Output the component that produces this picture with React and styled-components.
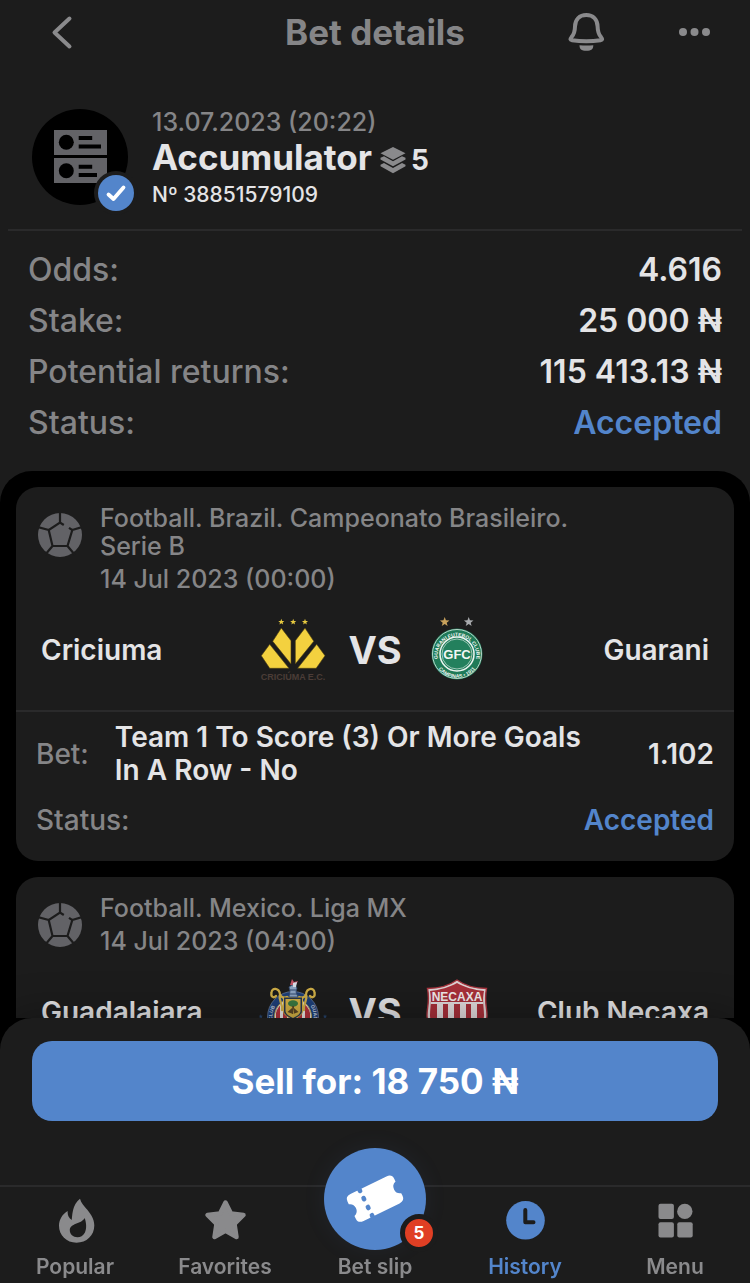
import React from "react";
import styled, { createGlobalStyle } from "styled-components";

const COLORS = {
  surface: "#1c1c1c",
  back: "#000000",
  line: "#2a2a2b",
  text: "#e4e4e6",
  muted: "#858587",
  icon: "#8a8a8c",
  ball: "#626266",
  blue: "#5385cb",
  red: "#e03f24",
};

const GlobalStyle = createGlobalStyle`
  * {
    box-sizing: border-box;
  }
  body {
    margin: 0;
    background: ${COLORS.back};
    color: ${COLORS.text};
    font-family: Inter, "Liberation Sans", sans-serif;
  }
  h1, h2, p, dl, dd {
    margin: 0;
  }
  button {
    border: 0;
    padding: 0;
    background: none;
    color: inherit;
    font: inherit;
    cursor: pointer;
  }
  svg {
    display: block;
    flex: none;
  }
`;

const Page = styled.div`
  display: flex;
  flex-direction: column;
  height: 100vh;
  background: ${COLORS.back};
`;

const Content = styled.main`
  flex: 1;
  min-height: 0;
  overflow-y: auto;
  scrollbar-width: none;
  background: ${COLORS.surface};
`;

const Header = styled.header`
  display: grid;
  grid-template-columns: 1fr auto 1fr;
  align-items: center;
  height: 64px;
  padding: 0 32px;
`;

const Title = styled.h1`
  color: ${COLORS.muted};
  font-size: 35px;
  font-weight: 700;
  line-height: 40px;
`;

const IconButton = styled.button`
  display: block;
  width: 48px;
  height: 48px;
`;

const Actions = styled.div`
  display: flex;
  justify-content: flex-end;
  gap: 60px;
`;

const Summary = styled.section`
  display: flex;
  gap: 24px;
  margin: 0 8px;
  padding: 45px 24px 18px;
  border-bottom: 2px solid ${COLORS.line};
`;

const SummaryText = styled.div`
  display: flex;
  flex-direction: column;
`;

const SummaryDate = styled.p`
  color: ${COLORS.muted};
  font-size: 25px;
  font-weight: 500;
  line-height: 26px;
`;

const SummaryTitle = styled.h2`
  display: flex;
  align-items: center;
  gap: 8px;
  font-size: 35px;
  font-weight: 700;
  line-height: 44px;
`;

const Legs = styled.span`
  display: flex;
  align-items: center;
  gap: 5px;
  padding-top: 5px;
  font-size: 28px;
  line-height: 34px;
`;

const SummaryNumber = styled.p`
  font-size: 21px;
  font-weight: 500;
  line-height: 32px;
`;

const Stats = styled.dl`
  padding: 13px 28px 23px;
`;

const Stat = styled.div`
  display: flex;
  justify-content: space-between;
  font-size: 32px;
  line-height: 51px;
`;

const StatName = styled.dt`
  color: ${COLORS.muted};
  font-weight: 500;
`;

const StatValue = styled.dd`
  color: ${(props) => (props.$accent ? COLORS.blue : COLORS.text)};
  font-weight: 600;
`;

const Events = styled.section`
  display: flex;
  flex-direction: column;
  gap: 16px;
  padding: 16px;
  border-radius: 32px 32px 0 0;
  background: ${COLORS.back};
`;

const Card = styled.article`
  border-radius: 22px;
  background: ${COLORS.surface};
`;

const League = styled.div`
  display: flex;
  gap: 18px;
  padding: 17px 140px 0 22px;
  color: ${COLORS.muted};
  font-size: 25px;
  font-weight: 500;
  line-height: 28px;

  & > svg {
    margin-top: 9px;
  }
`;

const Kickoff = styled.p`
  padding-top: 5px;
`;

const Match = styled.div`
  display: grid;
  grid-template-columns: 1fr auto 1fr;
  align-items: center;
  gap: 20px;
  padding: 23px 25px 26px;
`;

const Team = styled.p`
  font-size: 28px;
  font-weight: 600;
  line-height: 34px;
  text-align: ${(props) => (props.$right ? "right" : "left")};
`;

const Versus = styled.div`
  display: grid;
  grid-template-columns: 68px 52px 68px;
  justify-items: center;
  align-items: center;
  gap: 22px;
  font-size: 38px;
  font-weight: 700;
  line-height: 44px;
`;

const Bet = styled.dl`
  border-top: 2px solid ${COLORS.line};
  padding: 9px 20px 24px;
  font-size: 28px;
`;

const BetRow = styled.div`
  display: flex;
  align-items: center;
  gap: 26px;
  padding-bottom: ${(props) => (props.$spaced ? "17px" : "0")};
  line-height: 33px;
`;

const BetName = styled.dt`
  color: ${COLORS.muted};
  font-weight: 500;
`;

const BetPick = styled.dd`
  flex: 1;
  padding-right: 20px;
  font-weight: 600;
`;

const BetValue = styled.dd`
  margin-left: auto;
  color: ${(props) => (props.$accent ? COLORS.blue : COLORS.text)};
  font-weight: 600;
`;

const Dock = styled.footer`
  position: relative;
  border-radius: 32px 32px 0 0;
  background: ${COLORS.surface};
  box-shadow: 0 -4px 40px rgba(0, 0, 0, 0.3);
`;

const SellArea = styled.div`
  padding: 23px 32px 64px;
`;

const SellButton = styled.button`
  width: 100%;
  height: 80px;
  border-radius: 20px;
  background: ${COLORS.blue};
  color: #ffffff;
  font-size: 35px;
  font-weight: 700;
`;

/* the row keeps its height so that the bet slip circle can rise above it */
const Nav = styled.nav`
  display: grid;
  grid-template-columns: repeat(5, 1fr);
  grid-template-rows: 96px;
  align-items: end;
  border-top: 2px solid ${COLORS.line};
`;

const Tab = styled.a`
  display: flex;
  flex-direction: column;
  align-items: center;
  color: ${(props) => (props.$active ? COLORS.blue : COLORS.icon)};
  font-size: 21px;
  font-weight: 600;
  line-height: 24px;
  text-decoration: none;
  padding-bottom: 4px;
`;

const TabIcon = styled.span`
  height: 59px;
`;

const SlipIcon = styled.span`
  position: relative;
  height: 107px;
`;

const SlipCircle = styled.span`
  display: block;
  border-radius: 50%;
  background: ${COLORS.blue};
  box-shadow: 0 0 24px rgba(83, 133, 203, 0.08);
`;

const Badge = styled.span`
  position: absolute;
  right: -12px;
  bottom: 3px;
  width: 38px;
  height: 38px;
  border: 5px solid ${COLORS.surface};
  border-radius: 50%;
  background: ${COLORS.red};
  color: #ffffff;
  font-size: 17px;
  font-weight: 700;
  line-height: 28px;
  text-align: center;
`;

const starPath = (cx, cy, r) => {
  const points = [];
  for (let i = 0; i < 10; i++) {
    const radius = i % 2 ? r * 0.42 : r;
    const angle = (Math.PI / 5) * i - Math.PI / 2;
    points.push(
      `${(cx + radius * Math.cos(angle)).toFixed(2)},${(
        cy +
        radius * Math.sin(angle)
      ).toFixed(2)}`
    );
  }
  return points.join(" ");
};

const BackIcon = () => (
  <svg width="48" height="48" viewBox="0 0 48 48" fill="none">
    <path
      d="M37.500 10.500 22.500 24.500 37.500 38.500"
      stroke={COLORS.icon}
      strokeWidth="4"
      strokeLinecap="round"
      strokeLinejoin="round"
    />
  </svg>
);

const BellIcon = () => (
  <svg width="48" height="48" viewBox="0 0 48 48" fill="none">
    <path
      d="M24.300 7C17.500 7 13.200 11.500 13 18.500C12.900 24 12 26.500 9.500 29.200C7.800 31.200 8.200 32 10 32.200C19 33.600 29.600 33.600 38.600 32.200C40.400 32 40.800 31.200 39.100 29.200C36.600 26.500 35.700 24 35.600 18.500C35.400 11.500 31.100 7 24.300 7Z"
      stroke={COLORS.icon}
      strokeWidth="4"
      strokeLinejoin="round"
    />
    <path
      d="M17.500 37.200C22 37.700 27 37.700 31.300 37.200C31.300 41 29.500 42.700 24.400 42.700S17.500 41 17.500 37.200Z"
      fill={COLORS.icon}
    />
  </svg>
);

const DotsIcon = () => (
  <svg width="48" height="48" viewBox="0 0 48 48" fill={COLORS.icon}>
    <circle cx="13" cy="24" r="4" />
    <circle cx="24.500" cy="24" r="4" />
    <circle cx="36" cy="24" r="4" />
  </svg>
);

const CouponIcon = () => (
  <svg width="96" height="96" viewBox="0 0 96 96" overflow="visible">
    <circle cx="48" cy="48" r="48" fill="#000" />
    <path d="M22 21h53v25H22zM22 49h53v25H22z" fill="#636367" />
    <circle cx="34.300" cy="33.300" r="7.500" />
    <circle cx="34.300" cy="61.700" r="7.500" />
    <path d="M46.700 27h13.500v4H46.700zM46.700 35.500H69v4H46.700zM46.700 55.700h13.500v4H46.700zM46.700 64H65v4H46.700z" />
    <circle cx="84" cy="84" r="22" fill={COLORS.surface} />
    <circle cx="84" cy="84" r="18" fill={COLORS.blue} />
    <path
      d="M76.500 85.500 81.500 90 91.500 78.500"
      fill="none"
      stroke="#fff"
      strokeWidth="3.800"
      strokeLinecap="round"
      strokeLinejoin="round"
    />
  </svg>
);

const LayersIcon = () => (
  <svg width="26" height="28" viewBox="0 0 26 28" fill={COLORS.icon}>
    <path d="M13 1 25.500 7.300 13 13.800.500 7.300Z" />
    <path d="M.500 11.800 4 10.300 13 15.200 22 10.300 25.500 11.800V13.400L13 20.200.500 13.400Z" />
    <path d="M.500 18.800 4 17 13 22 22 17 25.500 18.800V20.200L13 27.200.500 20.200Z" />
  </svg>
);

const BallIcon = () => (
  <svg width="44" height="44" viewBox="0 0 44 44">
    <circle cx="22" cy="22" r="22" fill={COLORS.ball} />
    <path
      d="M22 0V9.500M10.700 17 0 14M34.300 17 44 14M14.500 33 7 42M29.500 33 37 42M25.800 12 22 9.500 10.700 17 14.500 33H29.500L34.300 17 31 14.800"
      fill="none"
      stroke={COLORS.surface}
      strokeWidth="2.200"
    />
  </svg>
);

const CriciumaCrest = () => (
  <svg width="68" height="68" viewBox="0 0 68 68" overflow="visible">
    <g fill="#f3d13f" stroke="#4a3d10" strokeWidth="0.600">
      <path d="M22.300 12 32 24.700V48L13.700 25.300Z" />
      <path d="M46 12 36.300 24.700V48L54.800 25.300Z" />
      <path d="M10.700 28.300 30 52.300H10.700L2.300 39.700Z" />
      <path d="M57.700 28.300 66 39.700 57.200 52.300H38.600Z" />
    </g>
    <g fill="#e6c940">
      <polygon points={starPath(22.3, 6, 3.2)} />
      <polygon points={starPath(34.2, 6, 3.2)} />
      <polygon points={starPath(46, 6, 3.2)} />
    </g>
    <text
      x="34"
      y="64"
      fill="#4b3c37"
      fontFamily="Liberation Sans, sans-serif"
      fontSize="9"
      fontWeight="700"
      textAnchor="middle"
    >
      CRICIÚMA E.C.
    </text>
  </svg>
);

const GuaraniCrest = () => (
  <svg width="68" height="68" viewBox="0 0 68 68">
    <defs>
      <path id="guaraniTop" d="M15.500 46A19.500 19.500 0 1 1 52.500 46" />
      <path id="guaraniBottom" d="M14 50.500A23.300 23.300 0 0 0 54 50.500" />
    </defs>
    <polygon points={starPath(21.7, 6, 5)} fill="#c9a25c" />
    <polygon points={starPath(45.7, 6, 5)} fill="#a9abae" />
    <circle cx="34" cy="38" r="25.500" fill="#1f7a58" />
    <circle cx="34" cy="38" r="24.500" fill="none" stroke="#dcebe4" strokeWidth="0.800" />
    <circle cx="34" cy="38" r="17" fill="#23805d" stroke="#eef5f1" strokeWidth="1.500" />
    <circle cx="34" cy="38" r="15" fill="none" stroke="#eef5f1" strokeWidth="0.600" />
    <g fill="#f2f7f4" fontFamily="Liberation Sans, sans-serif" fontWeight="700">
      <text fontSize="5">
        <textPath href="#guaraniTop" startOffset="50%" textAnchor="middle">
          GUARANI FUTEBOL CLUBE
        </textPath>
      </text>
      <text fontSize="5">
        <textPath href="#guaraniBottom" startOffset="50%" textAnchor="middle">
          CAMPINAS • 1911
        </textPath>
      </text>
      <text x="34" y="42.700" fontSize="13" textAnchor="middle">
        GFC
      </text>
    </g>
  </svg>
);

const GuadalajaraCrest = () => (
  <svg width="68" height="68" viewBox="0 0 68 68">
    <defs>
      <clipPath id="chivasInner">
        <circle cx="34" cy="39" r="17.500" />
      </clipPath>
      <path id="chivasLeft" d="M13.500 42A20.700 20.700 0 0 1 24 21" />
      <path id="chivasRight" d="M44 21A20.700 20.700 0 0 1 54.500 42" />
    </defs>
    <circle cx="34" cy="39" r="25.500" fill="#1e3f78" stroke="#7f93b4" strokeWidth="0.600" />
    <circle cx="34" cy="39" r="18.500" fill="#e8e6e4" stroke="#b8a258" strokeWidth="1" />
    <g clipPath="url(#chivasInner)" fill="#b5333c">
      <path d="M17 20h4v40h-4zM24 20h4v40h-4zM31 20h4v40h-4zM39 20h4v40h-4zM46 20h5v40h-5z" />
    </g>
    <g fill="#c7d0df" fontFamily="Liberation Sans, sans-serif" fontWeight="700" fontSize="5">
      <text>
        <textPath href="#chivasLeft">CLUB</textPath>
      </text>
      <text>
        <textPath href="#chivasRight" startOffset="100%" textAnchor="end">
          GUAD
        </textPath>
      </text>
    </g>
    <path
      d="M28 19C25 21 22 19 21 16C20 10 13 9 12.500 14.500C11.500 19 15 20.500 17 18M21 16C19 23 24 25 23 32M40 19C43 21 46 19 47 16C48 10 55 9 55.500 14.500C56.500 19 53 20.500 51 18M47 16C49 23 44 25 45 32"
      fill="none"
      stroke="#cfae47"
      strokeWidth="2.300"
      strokeLinecap="round"
    />
    <path
      d="M24.500 19H43.500V33C43.500 37 39 39 34 42C29 39 24.500 37 24.500 33Z"
      fill="#28364f"
      stroke="#d3b044"
    />
    <path d="M26.500 21H41.500V33C41.500 36 38 38 34 40C30 38 26.500 36 26.500 33Z" fill="#d3b044" />
    <ellipse cx="34" cy="25.500" rx="5" ry="3.200" fill="#397841" />
    <path d="M33.200 28h1.800v8h-1.800zM28.500 34l4.500-4 1 6zM39.500 34l-4.500-4-1 6z" fill="#5b4524" />
    <path d="M30 19 31 13 30 9 33 7H36L38 10 37 14 39 19Z" fill="#8da4c2" stroke="#31486f" strokeWidth="0.800" />
    <path d="M31 12h6M30 16h8" stroke="#31486f" strokeWidth="1" />
    <path d="M31 7 33 1 35 4 39 3 37 7Z" fill="#c05363" />
    <path d="M34 5 38 4 37 9 34 9Z" fill="#d8dee8" />
    <polygon points={starPath(1.8, 38.5, 2.2)} fill="#28466f" />
    <polygon points={starPath(66, 38.5, 2.2)} fill="#28466f" />
  </svg>
);

const NecaxaCrest = () => (
  <svg width="68" height="68" viewBox="0 0 68 68">
    <defs>
      <clipPath id="necaxaShield">
        <path d="M7 13C17 12 27 9 34 5C41 9 51 12 61 13C59 23 61 29 61 37C61 51 49 60 34 66C19 60 7 51 7 37C7 29 9 23 7 13Z" />
      </clipPath>
    </defs>
    <path
      d="M4.500 10.500C16 10.500 27 7 34 2C41 7 52 10.500 63.500 10.500C61 23 64 29 64 37C64 53 50 62 34 67C18 62 4 53 4 37C4 29 7 23 4.500 10.500Z"
      fill="#dfd3d4"
      stroke="#a8343e"
      strokeWidth="1.400"
    />
    <g clipPath="url(#necaxaShield)">
      <path d="M0 0h68v68H0z" fill="#a8303a" />
      <path d="M14 26h6v42h-6zM25 26h6v42h-6zM37 26h6v42h-6zM48 26h6v42h-6z" fill="#e2dcdd" />
      <path d="M0 24h68v2H0z" fill="#e2dcdd" />
    </g>
    <text
      x="34"
      y="22.500"
      fill="#f1ebec"
      fontFamily="Liberation Sans, sans-serif"
      fontSize="12"
      fontWeight="700"
      textAnchor="middle"
    >
      NECAXA
    </text>
  </svg>
);

const FlameIcon = () => (
  <svg width="48" height="48" viewBox="0 0 48 48">
    <path
      d="M29 2.700C31 11 43.300 17 43.300 29.500C43.300 39.500 35.500 46.700 25.500 46.700S8 39.500 8 29.800C8 23.500 11.500 18 16.700 15C16.300 19 17.800 22 20.700 24C21.500 16 22 8 29 2.700Z"
      fill={COLORS.icon}
    />
    <path
      d="M33.700 22C35.500 27 35.800 33 33.800 36.800C32 40 29.500 41.300 26.500 41.300C22 41.300 18.800 38.300 18.800 34.300C18.800 27 30 28.500 33.700 22Z"
      fill={COLORS.surface}
    />
  </svg>
);

const StarIcon = () => (
  <svg width="48" height="48" viewBox="0 0 48 48">
    <path
      d="M24.500 6.500 30 17.500 42.500 19 33.500 27.800 35.500 41 24.500 34.800 13.500 41 15.500 27.800 6.500 19 19 17.500Z"
      fill={COLORS.icon}
      stroke={COLORS.icon}
      strokeWidth="4.500"
      strokeLinejoin="round"
    />
  </svg>
);

const ClockIcon = () => (
  <svg width="48" height="48" viewBox="0 0 48 48" fill="none">
    <circle cx="24.500" cy="24.300" r="19.300" fill={COLORS.blue} />
    <path
      d="M24.300 14V26.300H32.500"
      stroke={COLORS.surface}
      strokeWidth="4"
      strokeLinecap="round"
      strokeLinejoin="round"
    />
  </svg>
);

const MenuIcon = () => (
  <svg width="48" height="48" viewBox="0 0 48 48" fill={COLORS.icon}>
    <rect x="7.500" y="7.700" width="15.400" height="15.400" rx="2" />
    <circle cx="33.800" cy="15.400" r="7.700" />
    <rect x="7.500" y="26.200" width="15.400" height="15.400" rx="2" />
    <rect x="26.300" y="26.200" width="15.400" height="15.400" rx="2" />
  </svg>
);

const TicketIcon = () => (
  <svg width="102" height="102" viewBox="0 0 102 102">
    <g transform="translate(51 50.700) rotate(-26)">
      <path
        d="M-20 -15H20Q26 -15 26 -9.500V-6.500A6.800 6.800 0 0 0 26 6.500V9.500Q26 15 20 15H-20Q-26 15 -26 9.500V6.500A6.800 6.800 0 0 0 -26 -6.500V-9.500Q-26 -15 -20 -15Z"
        fill="#fff"
      />
      <path
        d="M-10 -16V-13.500M-10 -5.500V-4.300M-10 4.300V5.500M-10 13.500V16"
        stroke={COLORS.blue}
        strokeWidth="4.600"
        strokeLinecap="round"
      />
    </g>
  </svg>
);

const stats = [
  { name: "Odds:", value: "4.616" },
  { name: "Stake:", value: "25 000 ₦" },
  { name: "Potential returns:", value: "115 413.13 ₦" },
  { name: "Status:", value: "Accepted", accent: true },
];

const events = [
  {
    league: "Football. Brazil. Campeonato Brasileiro. Serie B",
    date: "14 Jul 2023 (00:00)",
    home: "Criciuma",
    away: "Guarani",
    homeCrest: <CriciumaCrest />,
    awayCrest: <GuaraniCrest />,
    bet: "Team 1 To Score (3) Or More Goals In A Row - No",
    odds: "1.102",
  },
  {
    league: "Football. Mexico. Liga MX",
    date: "14 Jul 2023 (04:00)",
    home: "Guadalajara",
    away: "Club Necaxa",
    homeCrest: <GuadalajaraCrest />,
    awayCrest: <NecaxaCrest />,
  },
];

function Event({ event }) {
  return (
    <Card>
      <League>
        <BallIcon />
        <div>
          <p>{event.league}</p>
          <Kickoff>{event.date}</Kickoff>
        </div>
      </League>
      <Match>
        <Team>{event.home}</Team>
        <Versus>
          {event.homeCrest}
          <span>VS</span>
          {event.awayCrest}
        </Versus>
        <Team $right>{event.away}</Team>
      </Match>
      {event.bet && (
        <Bet>
          <BetRow $spaced>
            <BetName>Bet:</BetName>
            <BetPick>{event.bet}</BetPick>
            <BetValue>{event.odds}</BetValue>
          </BetRow>
          <BetRow>
            <BetName>Status:</BetName>
            <BetValue $accent>Accepted</BetValue>
          </BetRow>
        </Bet>
      )}
    </Card>
  );
}

function App() {
  return (
    <>
      <GlobalStyle />
      <Page>
        <Content>
          <Header>
            <IconButton aria-label="Back">
              <BackIcon />
            </IconButton>
            <Title>Bet details</Title>
            <Actions>
              <IconButton aria-label="Notifications">
                <BellIcon />
              </IconButton>
              <IconButton aria-label="More">
                <DotsIcon />
              </IconButton>
            </Actions>
          </Header>
          <Summary>
            <CouponIcon />
            <SummaryText>
              <SummaryDate>13.07.2023 (20:22)</SummaryDate>
              <SummaryTitle>
                Accumulator
                <Legs>
                  <LayersIcon />5
                </Legs>
              </SummaryTitle>
              <SummaryNumber>Nº 38851579109</SummaryNumber>
            </SummaryText>
          </Summary>
          <Stats>
            {stats.map((stat) => (
              <Stat key={stat.name}>
                <StatName>{stat.name}</StatName>
                <StatValue $accent={stat.accent}>{stat.value}</StatValue>
              </Stat>
            ))}
          </Stats>
          <Events>
            {events.map((event) => (
              <Event key={event.home} event={event} />
            ))}
          </Events>
        </Content>
        <Dock>
          <SellArea>
            <SellButton>Sell for: 18 750 ₦</SellButton>
          </SellArea>
          <Nav>
            <Tab href="#popular">
              <TabIcon>
                <FlameIcon />
              </TabIcon>
              Popular
            </Tab>
            <Tab href="#favorites">
              <TabIcon>
                <StarIcon />
              </TabIcon>
              Favorites
            </Tab>
            <Tab href="#betslip">
              <SlipIcon>
                <SlipCircle>
                  <TicketIcon />
                </SlipCircle>
                <Badge>5</Badge>
              </SlipIcon>
              Bet slip
            </Tab>
            <Tab href="#history" $active>
              <TabIcon>
                <ClockIcon />
              </TabIcon>
              History
            </Tab>
            <Tab href="#menu">
              <TabIcon>
                <MenuIcon />
              </TabIcon>
              Menu
            </Tab>
          </Nav>
        </Dock>
      </Page>
    </>
  );
}

export default App;
